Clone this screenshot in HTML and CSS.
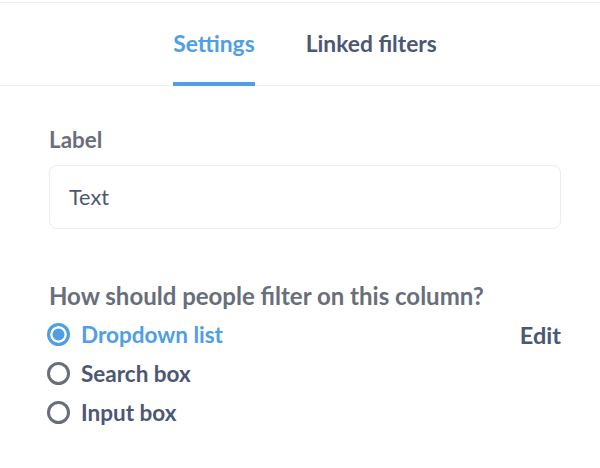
FILE: index.html
```html
<!DOCTYPE html>
<html>
<head>
<meta charset="utf-8">
<link rel="stylesheet" href="styles.css">
</head>
<body>
<div class="panel">
  <nav class="tabs">
    <div class="tab tab-active">Settings</div>
    <div class="tab">Linked filters</div>
  </nav>
  <div class="content">
    <div class="field-label">Label</div>
    <div class="input">Text</div>
    <div class="question">How should people filter on this column?</div>
    <div class="options">
      <div class="option option-selected">
        <span class="radio"></span>
        <span class="option-text">Dropdown list</span>
        <span class="edit">Edit</span>
      </div>
      <div class="option">
        <span class="radio"></span>
        <span class="option-text">Search box</span>
      </div>
      <div class="option">
        <span class="radio"></span>
        <span class="option-text">Input box</span>
      </div>
    </div>
  </div>
</div>
</body>
</html>
```
FILE: styles.css
```css
html, body {
  margin: 0;
  padding: 0;
  background: #ffffff;
}
body {
  font-family: Lato, "Noto Sans", sans-serif;
  color: #4c5773;
  padding-top: 2px;
}
.panel {
  border-top: 1px solid #eeeeee;
}
.tabs {
  display: flex;
  justify-content: center;
  gap: 51px;
  padding-left: 10px;
  border-bottom: 1px solid #eeeeee;
  height: 82px;
}
.tab {
  font-weight: 700;
  font-size: 22.8px;
  line-height: 26px;
  padding-top: 27px;
  height: 52px;
  border-bottom: 4px solid transparent;
  color: #4c5773;
}
.tab-active {
  color: #509ee3;
  border-bottom-color: #509ee3;
}
.content {
  padding: 42px 39px 0 49px;
}
.field-label {
  font-weight: 700;
  font-size: 22.4px;
  line-height: 24px;
  color: #696e7b;
}
.input {
  margin-top: 13px;
  border: 1px solid #eeecec;
  border-radius: 8px;
  box-sizing: border-box;
  height: 64px;
  padding: 0 19px;
  display: flex;
  align-items: center;
  font-size: 21.6px;
  color: #4c5773;
}
.question {
  margin-top: 53px;
  font-weight: 700;
  font-size: 24px;
  line-height: 28px;
  color: #696e7b;
}
.options {
  margin-top: 5px;
  display: flex;
  flex-direction: column;
}
.option {
  display: flex;
  align-items: center;
  height: 39px;
  font-weight: 700;
  font-size: 22.5px;
  color: #4c5773;
}
.radio {
  width: 23px;
  height: 23px;
  box-sizing: border-box;
  border: 3px solid #696e7b;
  border-radius: 50%;
  margin-left: -2px;
  margin-right: 11px;
  flex: none;
}
.option-selected {
  color: #509ee3;
}
.option-selected .radio {
  border-color: #509ee3;
  background: #509ee3;
  box-shadow: inset 0 0 0 2.5px #ffffff;
}
.option-text {
  flex: 1;
}
.edit {
  color: #4c5773;
  font-weight: 700;
  font-size: 23.5px;
}
```
